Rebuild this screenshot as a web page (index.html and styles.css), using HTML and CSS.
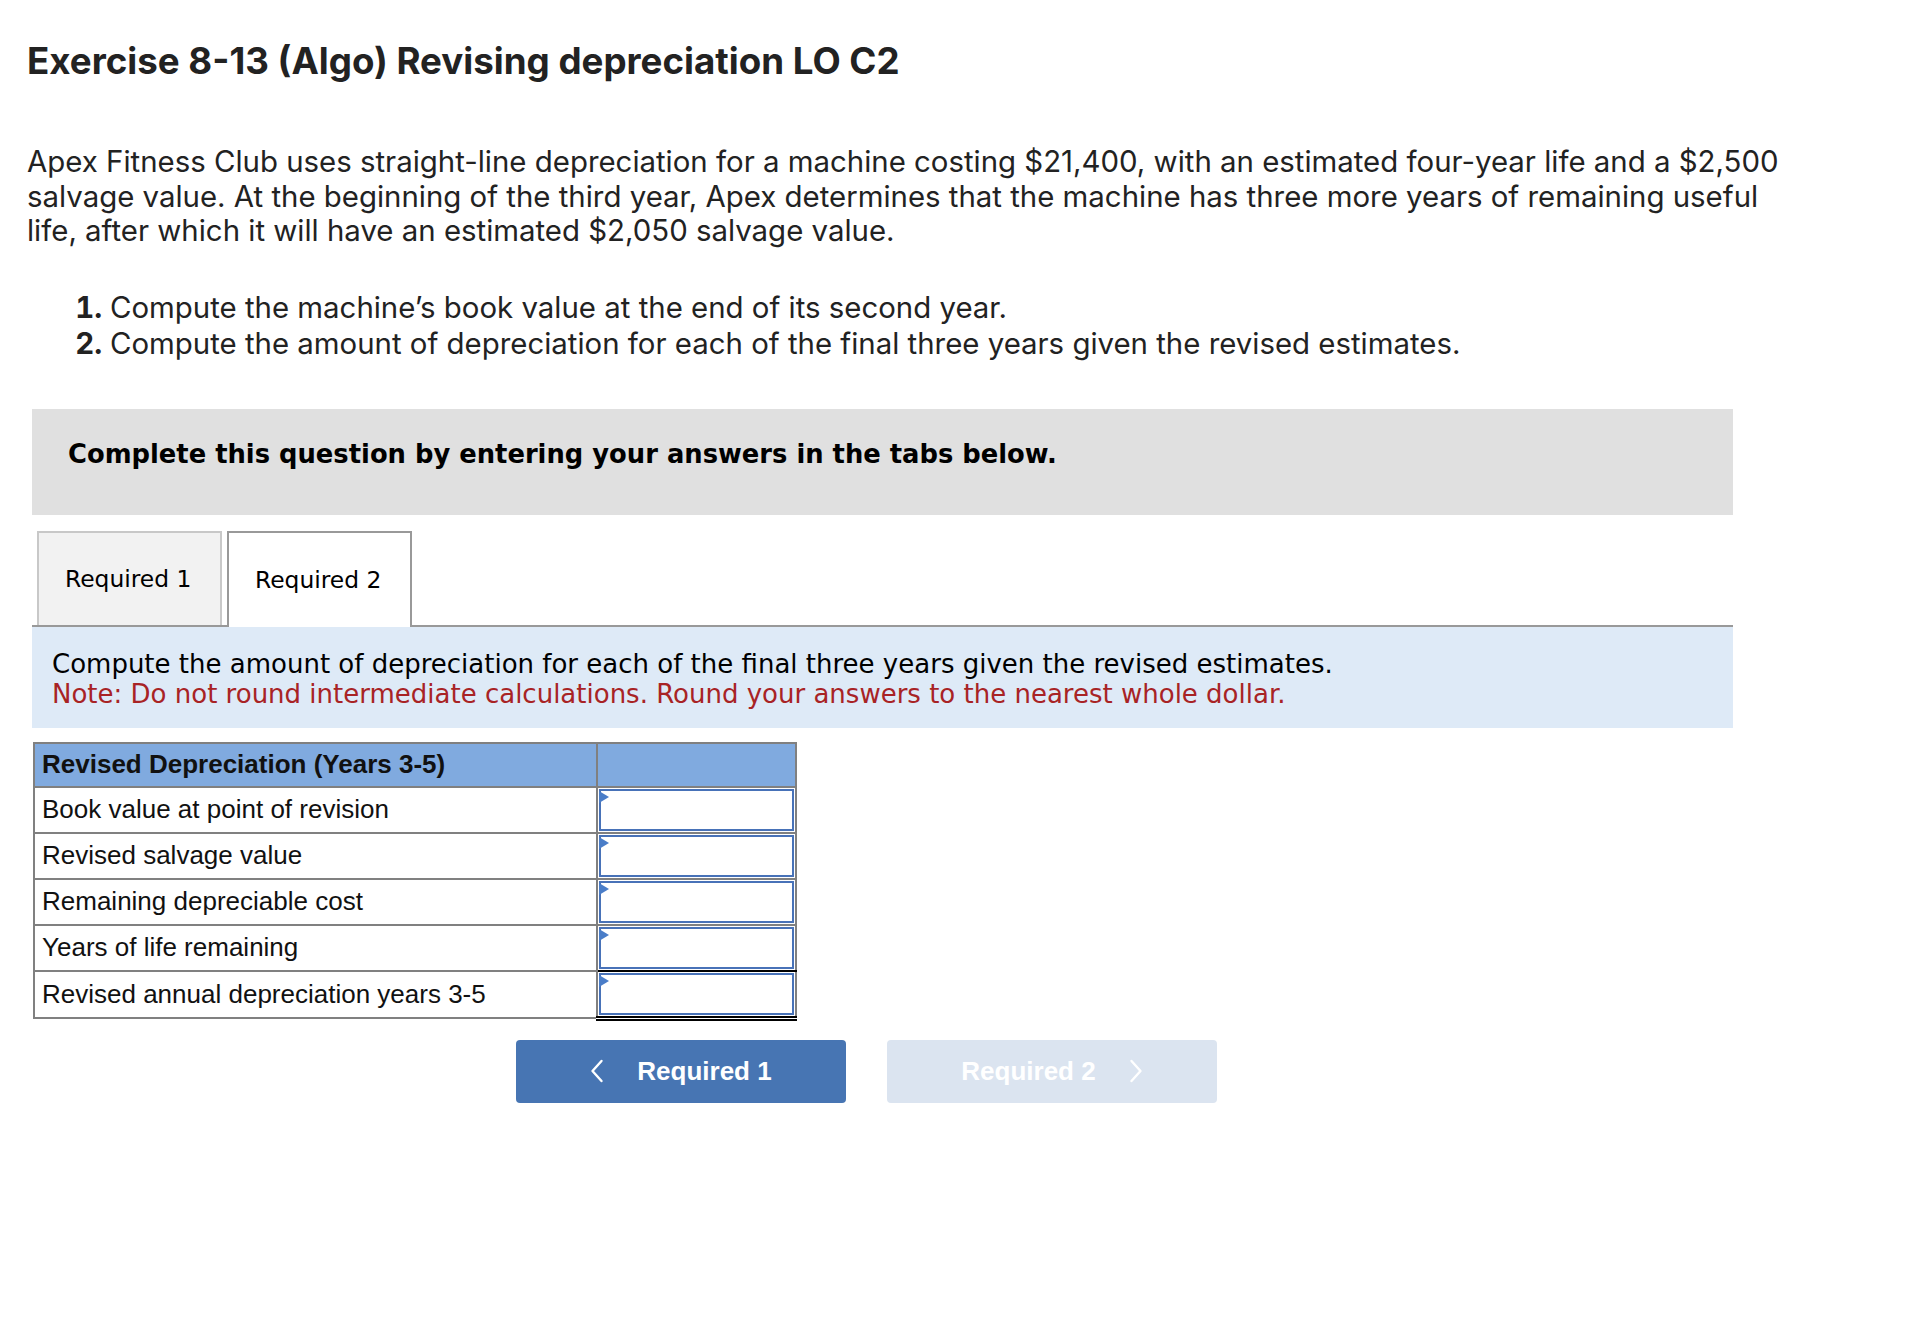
FILE: index.html
```html
<!DOCTYPE html>
<html lang="en">
<head>
<meta charset="utf-8">
<title>Exercise 8-13</title>
<link rel="stylesheet" href="styles.css">
</head>
<body>
<main class="page">
  <h1 class="title">Exercise 8-13 (Algo) Revising depreciation LO C2</h1>
  <p class="intro">Apex Fitness Club uses straight-line depreciation for a machine costing $21,400, with an estimated four-year life and a $2,500 salvage value. At the beginning of the third year, Apex determines that the machine has three more years of remaining useful life, after which it will have an estimated $2,050 salvage value.</p>
  <ol class="tasks">
    <li>Compute the machine’s book value at the end of its second year.</li>
    <li>Compute the amount of depreciation for each of the final three years given the revised estimates.</li>
  </ol>

  <section class="question">
    <div class="banner">Complete this question by entering your answers in the tabs below.</div>

    <div class="tabs">
      <div class="tab">Required 1</div>
      <div class="tab tab-active">Required 2</div>
    </div>

    <div class="instructions">
      <div class="instr-line">Compute the amount of depreciation for each of the final three years given the revised estimates.</div>
      <div class="instr-line note">Note: Do not round intermediate calculations. Round your answers to the nearest whole dollar.</div>
    </div>

    <table class="grid">
      <thead>
        <tr>
          <th class="label-cell">Revised Depreciation (Years 3-5)</th>
          <th class="value-cell"></th>
        </tr>
      </thead>
      <tbody>
        <tr>
          <td class="label-cell">Book value at point of revision</td>
          <td class="value-cell"><div class="entry"><span class="flag"></span></div></td>
        </tr>
        <tr>
          <td class="label-cell">Revised salvage value</td>
          <td class="value-cell"><div class="entry"><span class="flag"></span></div></td>
        </tr>
        <tr>
          <td class="label-cell">Remaining depreciable cost</td>
          <td class="value-cell"><div class="entry"><span class="flag"></span></div></td>
        </tr>
        <tr>
          <td class="label-cell">Years of life remaining</td>
          <td class="value-cell rule-single"><div class="entry"><span class="flag"></span></div></td>
        </tr>
        <tr class="last-row">
          <td class="label-cell">Revised annual depreciation years 3-5</td>
          <td class="value-cell rule-double"><div class="entry"><span class="flag"></span></div></td>
        </tr>
      </tbody>
    </table>

    <div class="nav">
      <button class="nav-btn nav-prev" type="button">
        <svg class="chev" width="14" height="24" viewBox="0 0 14 24"><path d="M11.5 2 L2.5 12 L11.5 22" fill="none" stroke="currentColor" stroke-width="2.4" stroke-linecap="round" stroke-linejoin="round"/></svg>
        <span>Required 1</span>
      </button>
      <button class="nav-btn nav-next" type="button" disabled>
        <span>Required 2</span>
        <svg class="chev" width="14" height="24" viewBox="0 0 14 24"><path d="M2.5 2 L11.5 12 L2.5 22" fill="none" stroke="currentColor" stroke-width="2.4" stroke-linecap="round" stroke-linejoin="round"/></svg>
      </button>
    </div>
  </section>
</main>
</body>
</html>
```
FILE: styles.css
```css
* { box-sizing: border-box; }

body {
  margin: 0;
  background: #ffffff;
  color: #222222;
  font-family: "Inter", "Liberation Sans", sans-serif;
}

.page {
  width: 1790px;
  padding: 40px 0 60px 27px;
}

.title {
  margin: 0;
  font-size: 36.7px;
  line-height: 42px;
  font-weight: 700;
  color: #222222;
}

.intro {
  margin: 63px 0 0;
  font-size: 29.4px;
  line-height: 34.5px;
  color: #222222;
}

.tasks {
  margin: 41px 0 0;
  padding-left: 83px;
  font-size: 29.4px;
  line-height: 36px;
  color: #222222;
}

.tasks li::marker {
  font-weight: 700;
}

.question {
  margin: 47px 0 0 5px;
  width: 1701px;
  font-family: "DejaVu Sans", Verdana, sans-serif;
  color: #000000;
}

.banner {
  background: #e0e0e0;
  padding: 32px 36px 48px;
  font-size: 25.8px;
  line-height: 26px;
  font-weight: 700;
}

.tabs {
  margin-top: 16px;
  display: flex;
  align-items: flex-end;
  gap: 5px;
  padding-left: 5px;
  border-bottom: 2px solid #999999;
}

.tab {
  width: 185px;
  height: 94px;
  padding-left: 26px;
  display: flex;
  align-items: center;
  background: #f2f2f2;
  border: 2px solid #c8c8c8;
  border-bottom: none;
  font-size: 23.4px;
}

.tab-active {
  height: 96px;
  margin-bottom: -2px;
  background: #ffffff;
  border-color: #999999;
  position: relative;
}

.instructions {
  background: #deeaf7;
  padding: 22px 20px 19px;
  font-size: 26px;
  line-height: 30px;
}

.note {
  color: #a82325;
}

.grid {
  margin: 14px 0 0 1px;
  width: 764px;
  border-collapse: collapse;
  font-family: "Liberation Sans", Arial, sans-serif;
  font-size: 26px;
  color: #111111;
}

.grid th,
.grid td {
  border: 2px solid #808080;
  padding: 0;
  text-align: left;
}

.grid thead th {
  background: #80aadf;
  height: 44px;
  font-weight: 700;
}

.grid td {
  height: 46px;
}

.grid .last-row td {
  height: 45px;
}

.label-cell {
  width: 564px;
  padding-left: 7px !important;
}

.value-cell {
  width: 200px;
}

.grid td.value-cell {
  padding: 1px !important;
}

.entry {
  position: relative;
  height: 42px;
  border: 2px solid #4872b8;
  background: #ffffff;
}

.flag {
  position: absolute;
  left: -2px;
  top: 0;
  width: 0;
  height: 0;
  border-top: 6.5px solid transparent;
  border-bottom: 6.5px solid transparent;
  border-left: 10px solid #4a7dc8;
}

.grid td.rule-single {
  border-bottom: 2px solid #000000;
}

.grid td.rule-double {
  border-bottom: 5px double #000000;
}

.nav {
  margin-top: 19px;
  padding-left: 484px;
  display: flex;
  gap: 41px;
}

.nav-btn {
  width: 330px;
  height: 63px;
  border: none;
  border-radius: 4px;
  display: flex;
  align-items: center;
  justify-content: center;
  gap: 33px;
  font-family: "Liberation Sans", Arial, sans-serif;
  font-size: 26px;
  font-weight: 700;
  color: #ffffff;
}

.nav-prev {
  background: #4775b3;
}

.nav-next {
  background: #dbe4f0;
}

.chev {
  display: block;
}
```
